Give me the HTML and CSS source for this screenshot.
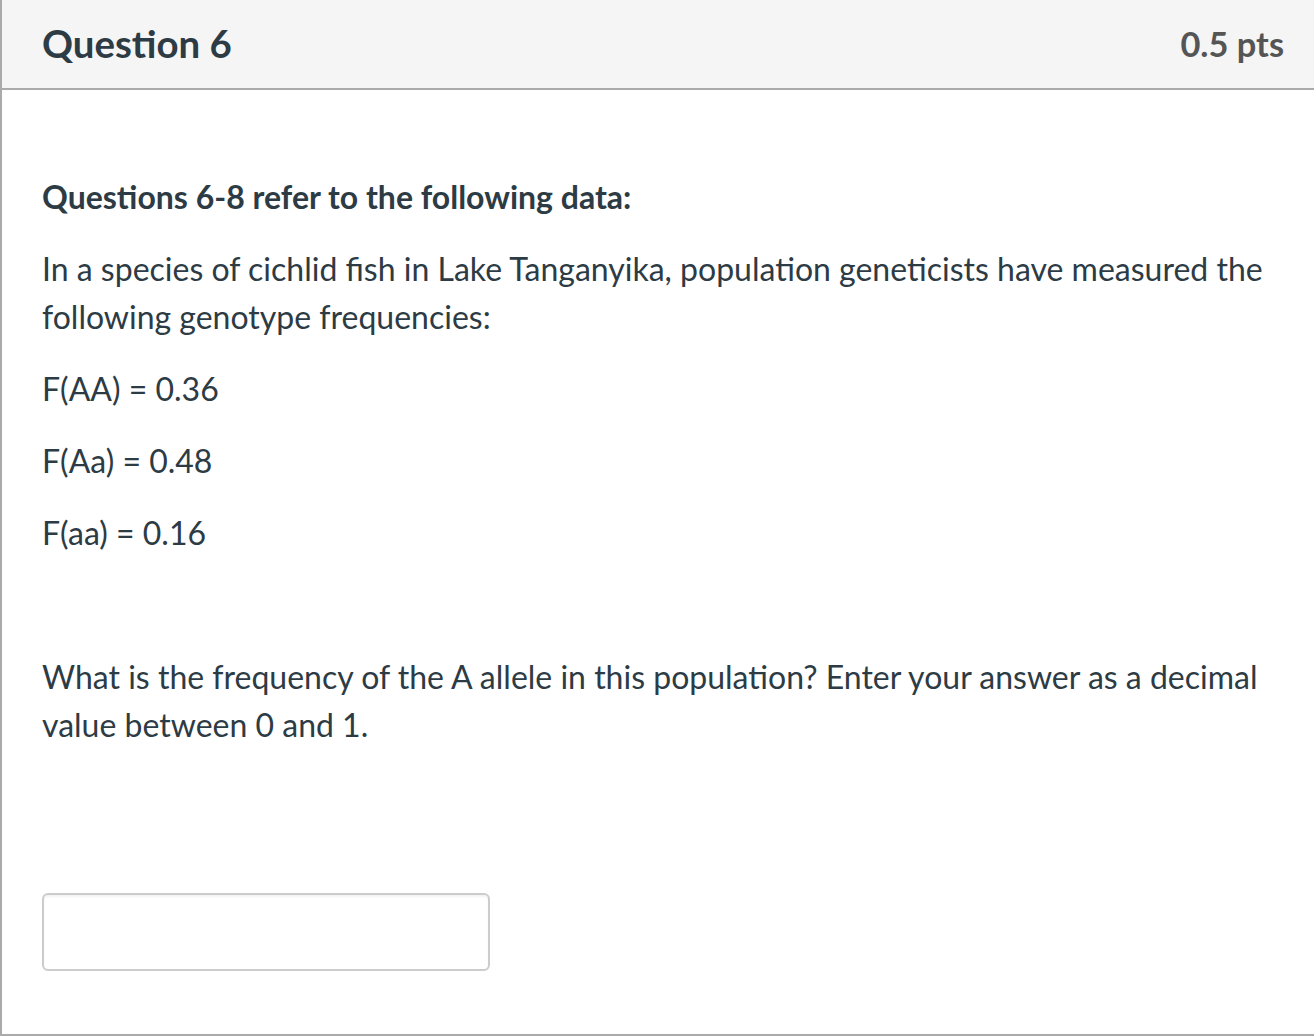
FILE: index.html
```html
<!DOCTYPE html>
<html>
<head>
<meta charset="utf-8">
<link rel="stylesheet" href="styles.css">
</head>
<body>
<div class="question">
  <div class="header">
    <h2 class="title">Question 6</h2>
    <div class="points">0.5 pts</div>
  </div>
  <div class="content">
    <p><strong>Questions 6-8 refer to the following data:</strong></p>
    <p>In a species of cichlid fish in Lake Tanganyika, population geneticists have measured the following genotype frequencies:</p>
    <p>F(AA) = 0.36</p>
    <p>F(Aa) = 0.48</p>
    <p>F(aa) = 0.16</p>
    <p class="blank">&nbsp;</p>
    <p>What is the frequency of the A allele in this population? Enter your answer as a decimal value between 0 and 1.</p>
    <div class="answer">
      <input class="answer-input" type="text">
    </div>
  </div>
</div>
</body>
</html>
```

FILE: styles.css
```css
html, body {
  margin: 0;
  padding: 0;
  background: #fff;
}
body {
  font-family: Lato, "Noto Sans", sans-serif;
  color: #2d3b45;
}
.question {
  width: 1330px;
  height: 1036px;
  border-left: 2px solid #aaaaaa;
  border-bottom: 2px solid #aaaaaa;
  box-sizing: border-box;
}
.header {
  display: flex;
  justify-content: space-between;
  align-items: center;
  height: 90px;
  box-sizing: border-box;
  background: #f5f5f5;
  border-bottom: 2px solid #aaaaaa;
  padding: 0 30px 2px 40px;
}
.title {
  margin: 0;
  font-size: 38.4px;
  font-weight: 700;
  color: #2d3b45;
}
.points {
  font-size: 34.4px;
  font-weight: 700;
  color: #555555;
  margin-right: 16px;
}
.content {
  padding: 83px 40px 0 40px;
  font-size: 32px;
  line-height: 48px;
}
.content p {
  margin: 0 0 24px 0;
  width: 1240px;
}
.content strong {
  font-weight: 700;
}
.answer {
  padding-top: 120px;
}
.answer-input {
  display: block;
  width: 448px;
  height: 78px;
  box-sizing: border-box;
  border: 2px solid #cccccc;
  border-radius: 6px;
  background: #fff;
  box-shadow: inset 0 2px 2px rgba(0,0,0,0.05);
  margin: 0;
  outline: none;
}
```
